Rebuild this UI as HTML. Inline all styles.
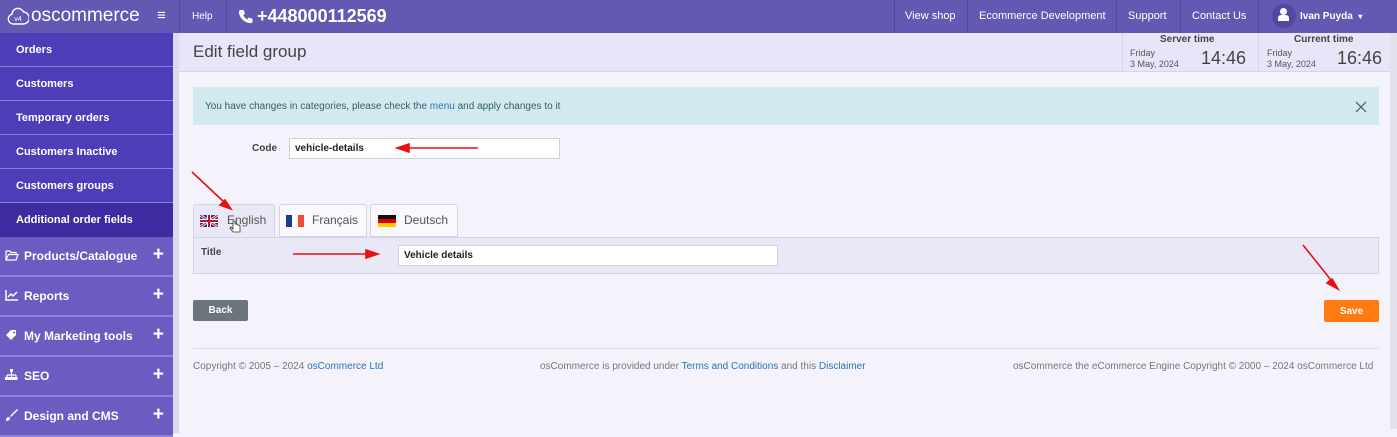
<!DOCTYPE html>
<html><head><meta charset="utf-8"><style>
*{box-sizing:border-box;margin:0;padding:0}
body{width:1397px;height:429px;overflow:hidden;font-family:"Liberation Sans",Arial,sans-serif;background:#f4f3fb;position:relative;font-size:11px;color:#333}
.abs{position:absolute}
.top{left:0;top:0;width:1397px;height:33px;background:#6259b3;color:#fff}
.top .sep{position:absolute;top:0;height:33px;border-left:1px solid #5149a0}
.side{left:0;top:33px;width:173px;height:400px;background:#4e3db9}
.sub{height:34px;border-bottom:1px solid #8a7fd6;color:#fff;font-weight:bold;font-size:11px;padding:11px 0 0 16px}
.main{height:40px;background:#6b5cc2;border-bottom:2px solid #8d82d6;color:#fff;font-weight:bold;font-size:12px;padding:12px 0 0 24px;position:relative}
.main .p{position:absolute;right:9px;top:7px;font-size:19px;font-weight:bold}
.main svg{position:absolute;left:5px;top:12px}
.strip{left:173px;top:33px;width:6px;height:400px;background:#dcd9ec}
</style></head><body>
<div class="abs top">
 <svg class="abs" style="left:7px;top:6px" width="22" height="22" viewBox="0 0 22 22"><path d="M6 18a5 5 0 0 1-1-9.8A6 6 0 0 1 16.5 6 5 5 0 0 1 16 18z" fill="none" stroke="#fff" stroke-width="1.4"/><text x="11" y="15" font-size="7" fill="#fff" text-anchor="middle" font-family="Liberation Sans">v4</text></svg>
 <div class="abs" style="left:31px;top:5px;font-size:19px;color:#fff">oscommerce</div>
 <div class="abs" style="left:157px;top:7px;font-size:15px">≡</div>
 <div class="sep" style="left:179px"></div>
 <div class="abs" style="left:192px;top:11px;font-size:10px">Help</div>
 <div class="sep" style="left:226px"></div>
 <svg class="abs" style="left:238px;top:9px" width="15" height="15" viewBox="0 0 16 16"><path d="M3 1l3 0 1.5 4-2 1.5c1 2 2.5 3.5 4.5 4.5l1.5-2 4 1.5v3c0 1-1 1.5-2 1.5C7 15 1 9 1 3c0-1 .7-2 2-2z" fill="#fff"/></svg>
 <div class="abs" style="left:257px;top:6px;font-size:18px;font-weight:bold">+448000112569</div>
 <div class="sep" style="left:894px"></div>
 <div class="abs" style="left:905px;top:10px;font-size:11px">View shop</div>
 <div class="sep" style="left:967px"></div>
 <div class="abs" style="left:979px;top:10px;font-size:11px">Ecommerce Development</div>
 <div class="sep" style="left:1116px"></div>
 <div class="abs" style="left:1128px;top:10px;font-size:11px">Support</div>
 <div class="sep" style="left:1180px"></div>
 <div class="abs" style="left:1192px;top:10px;font-size:11px">Contact Us</div>
 <div class="sep" style="left:1258px"></div>
 <div class="abs" style="left:1272px;top:4px;width:24px;height:24px;border-radius:50%;background:#5248a3"></div>
 <div class="abs" style="left:1280px;top:8px;width:7px;height:7px;background:#fff;border-radius:50%"></div>
 <div class="abs" style="left:1278px;top:15px;width:11px;height:6px;background:#fff;border-radius:3px 3px 0 0"></div>
 <div class="abs" style="left:1300px;top:11px;font-size:10px;font-weight:bold">Ivan Puyda &nbsp;<span style="font-size:8px">▾</span></div>
</div>
<div class="abs side">
 <div class="sub">Orders</div><div class="sub">Customers</div><div class="sub">Temporary orders</div><div class="sub">Customers Inactive</div><div class="sub">Customers groups</div>
 <div class="sub" style="background:#3d2ba0;border-bottom:none">Additional order fields</div>
 <div class="main"><svg width="14" height="12" viewBox="0 0 14 12"><path d="M1 2h4l1 1.5h5v2M1 2v9h10l2-5.5H3.5L1 11" fill="none" stroke="#fff" stroke-width="1.2"/></svg>Products/Catalogue<span class="p">+</span></div>
 <div class="main"><svg width="14" height="12" viewBox="0 0 14 12"><path d="M1 1v10h12M3 8l3-3 2 2 4-4" fill="none" stroke="#fff" stroke-width="1.5"/></svg>Reports<span class="p">+</span></div>
 <div class="main"><svg width="13" height="12" viewBox="0 0 13 12"><path d="M1 6l5-5h5v5l-5 5z" fill="#fff"/><circle cx="9" cy="3.5" r="1" fill="#6b5cc2"/></svg>My Marketing tools<span class="p">+</span></div>
 <div class="main"><svg width="13" height="12" viewBox="0 0 13 12"><rect x="5" y="0" width="3" height="3" fill="#fff"/><path d="M6.5 3v3M2 6h9M2 6v3M11 6v3M6.5 6v3" stroke="#fff" stroke-width="1.2"/><rect x="0" y="8" width="12.5" height="3" fill="#fff"/></svg>SEO<span class="p">+</span></div>
 <div class="main"><svg width="13" height="12" viewBox="0 0 13 12"><path d="M12 0L5 7l1 1 7-7zM4 8c-2 0-3 1-3 4 2 0 4-1 4-3z" fill="#fff"/></svg>Design and CMS<span class="p">+</span></div>
</div>
<div class="abs strip"></div>
<div class="abs" style="left:179px;top:33px;width:1211px;height:39px;background:#e7e5f8;border-bottom:1px solid #d6d3ea"></div>
<div class="abs" style="left:193px;top:42px;font-size:17px;color:#444">Edit field group</div>
<div class="abs" style="left:1122px;top:33px;width:1px;height:39px;background:#d6d3ea"></div>
<div class="abs" style="left:1258px;top:33px;width:1px;height:39px;background:#d6d3ea"></div>
<div class="abs" style="left:1160px;top:34px;font-size:10px;font-weight:bold;color:#444">Server time</div>
<div class="abs" style="left:1130px;top:48px;font-size:9px;line-height:11px;color:#555">Friday<br>3 May, 2024</div>
<div class="abs" style="left:1201px;top:48px;font-size:18px;color:#444">14:46</div>
<div class="abs" style="left:1294px;top:34px;font-size:10px;font-weight:bold;color:#444">Current time</div>
<div class="abs" style="left:1267px;top:48px;font-size:9px;line-height:11px;color:#555">Friday<br>3 May, 2024</div>
<div class="abs" style="left:1337px;top:48px;font-size:18px;color:#444">16:46</div>
<div class="abs" style="left:1390px;top:33px;width:7px;height:396px;background:#e3e2ea"></div>

<div class="abs" style="left:193px;top:87px;width:1186px;height:38px;background:#d1eaf0"></div>
<div class="abs" style="left:205px;top:101px;font-size:10px;color:#2f5f6a">You have changes in categories, please check the <span style="color:#2a72b5">menu</span> and apply changes to it</div>
<svg class="abs" style="left:1355px;top:101px" width="12" height="12"><path d="M1 1L11 11M11 1L1 11" stroke="#666" stroke-width="1.4"/></svg>

<div class="abs" style="left:252px;top:143px;font-size:10px;font-weight:bold;color:#444">Code</div>
<div class="abs" style="left:289px;top:138px;width:271px;height:21px;background:#fff;border:1px solid #d0d0d8;font-size:10px;font-weight:bold;padding:4px 5px;color:#222">vehicle-details</div>

<div class="abs" style="left:193px;top:204px;width:82px;height:34px;background:#e9e8f6;border:1px solid #d4d2e6;border-bottom:none;border-radius:3px 3px 0 0"></div>
<div class="abs" style="left:279px;top:204px;width:88px;height:33px;background:#f8f8fd;border:1px solid #d4d2e6;border-radius:3px 3px 0 0"></div>
<div class="abs" style="left:370px;top:204px;width:88px;height:33px;background:#f8f8fd;border:1px solid #d4d2e6;border-radius:3px 3px 0 0"></div>
<svg class="abs" style="left:200px;top:215px" width="18" height="12" viewBox="0 0 18 12"><rect width="18" height="12" fill="#233e8b"/><path d="M0 0L18 12M18 0L0 12" stroke="#fff" stroke-width="2.5"/><path d="M0 0L18 12M18 0L0 12" stroke="#c8102e" stroke-width="1"/><path d="M9 0V12M0 6H18" stroke="#fff" stroke-width="4"/><path d="M9 0V12M0 6H18" stroke="#c8102e" stroke-width="2"/></svg>
<div class="abs" style="left:227px;top:213px;font-size:12px;color:#555">English</div>
<div class="abs" style="left:286px;top:215px;width:6px;height:12px;background:#1b3a8c"></div><div class="abs" style="left:292px;top:215px;width:6px;height:12px;background:#fff"></div><div class="abs" style="left:298px;top:215px;width:6px;height:12px;background:#f04a3a"></div>
<div class="abs" style="left:312px;top:213px;font-size:12px;color:#555">Français</div>
<div class="abs" style="left:378px;top:215px;width:18px;height:4px;background:#111"></div><div class="abs" style="left:378px;top:219px;width:18px;height:4px;background:#d00"></div><div class="abs" style="left:378px;top:223px;width:18px;height:4px;background:#fc0"></div>
<div class="abs" style="left:404px;top:213px;font-size:12px;color:#555">Deutsch</div>

<div class="abs" style="left:193px;top:237px;width:1186px;height:37px;background:#e9e8f6;border:1px solid #d4d2e6"></div>
<div class="abs" style="left:201px;top:247px;font-size:10px;font-weight:bold;color:#444">Title</div>
<div class="abs" style="left:398px;top:245px;width:380px;height:21px;background:#fff;border:1px solid #d0d0d8;font-size:10px;font-weight:bold;padding:4px 5px;color:#222">Vehicle details</div>

<div class="abs" style="left:193px;top:300px;width:55px;height:21px;background:#6c757d;border-radius:2px;color:#fff;font-size:10px;font-weight:bold;text-align:center;padding-top:5px">Back</div>
<div class="abs" style="left:1324px;top:300px;width:55px;height:22px;background:#ff7a10;border-radius:2px;color:#fff;font-size:10px;font-weight:bold;text-align:center;padding-top:6px">Save</div>
<div class="abs" style="left:193px;top:348px;width:1186px;height:1px;background:#dcdbe6"></div>
<div class="abs" style="left:193px;top:361px;font-size:10px;color:#777">Copyright © 2005 – 2024 <span style="color:#2a72b5">osCommerce Ltd</span></div>
<div class="abs" style="left:540px;top:361px;font-size:10px;color:#777">osCommerce is provided under <span style="color:#2a72b5">Terms and Conditions</span> and this <span style="color:#2a72b5">Disclaimer</span></div>
<div class="abs" style="left:1013px;top:361px;font-size:10px;color:#777">osCommerce the eCommerce Engine Copyright © 2000 – 2024 osCommerce Ltd</div>

<svg class="abs" style="left:0;top:0" width="1397" height="429">
<g stroke="#e81010" stroke-width="1.6" fill="#e81010">
<line x1="478" y1="148" x2="405" y2="148"/><path d="M397 148l12-4v8z"/>
<line x1="293" y1="254" x2="368" y2="254"/><path d="M378 254l-12-4v8z"/>
<line x1="192" y1="172" x2="224" y2="202"/><path d="M231 209l-11-4 5-5z"/>
<line x1="1303" y1="245" x2="1331" y2="280"/><path d="M1338 289l-11-6 5-4z"/>
</g>
<path d="M233 221v8l-2-2-1 1 3 4h7v-6l-1-1h-2v-1h-2v-3h-2z" fill="#fff" stroke="#333" stroke-width="0.8"/>
</svg>
</body></html>
